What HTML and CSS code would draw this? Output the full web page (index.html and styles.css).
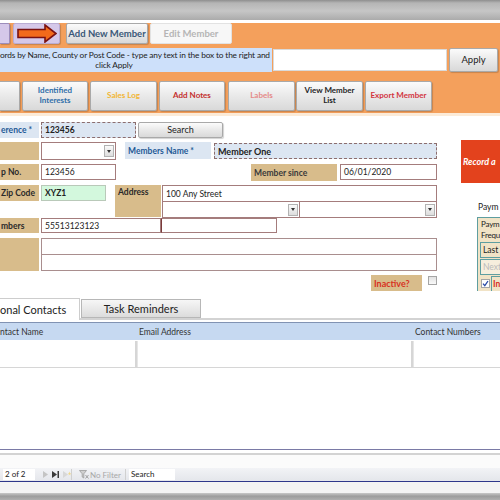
FILE: index.html
```html
<!DOCTYPE html>
<html lang="en">
<head>
    <meta charset="UTF-8">
    <title>Member Details</title>
    <link rel="stylesheet" href="styles.css">
</head>
<body>
<div class="titlebar"></div>
<div class="ribbon">
    <div class="toolbar">
        <button class="btn btn-back"></button>
        <button class="btn btn-next">
            <svg width="40" height="19" viewBox="0 0 40 19">
                <path d="M1 5.5 H28 V1 L39 9.5 L28 18 V13.5 H1 Z" fill="#F26A1B" stroke="#7A1212" stroke-width="1.6" stroke-linejoin="miter"/>
            </svg>
        </button>
        <button class="btn btn-add">Add New Member</button>
        <button class="btn btn-edit">Edit Member</button>
    </div>
    <div class="filter">
        <div class="hint">
            <div class="hint-first">ords by Name, County or Post Code - type any text in the box to the right and</div>
            <div class="hint-second">click Apply</div>
        </div>
        <div class="filter-box"></div>
        <button class="btn btn-apply">Apply</button>
    </div>
    <div class="actions">
        <button class="btn act act-find"></button>
        <button class="btn act act-interests">Identified<br>Interests</button>
        <button class="btn act act-sales">Sales Log</button>
        <button class="btn act act-notes">Add Notes</button>
        <button class="btn act act-labels">Labels</button>
        <button class="btn act act-view">View Member<br>List</button>
        <button class="btn act act-export">Export Member</button>
    </div>
</div>
<div class="edge"></div>

<div class="form">
    <div class="fields">
        <div class="row row-ref">
            <div class="lbl lbl-blue lbl-cut">erence *</div>
            <div class="fld fld-key fld-ref">123456</div>
            <button class="btn btn-search">Search</button>
        </div>
        <div class="row row-name">
            <div class="lbl lbl-tan lbl-cut"></div>
            <div class="fld fld-select fld-title"><span class="drop"></span></div>
            <div class="lbl lbl-blue lbl-name">Members Name *</div>
            <div class="fld fld-key fld-name">Member One</div>
        </div>
        <div class="row row-no">
            <div class="lbl lbl-tan lbl-cut">p No.</div>
            <div class="fld fld-no">123456</div>
            <div class="lbl lbl-tan lbl-since">Member since</div>
            <div class="fld fld-since">06/01/2020</div>
        </div>
        <div class="row row-address">
            <div class="lbl lbl-tan lbl-cut lbl-zip">Zip Code</div>
            <div class="fld fld-zip">XYZ1</div>
            <div class="lbl lbl-tan lbl-address">Address</div>
            <div class="address">
                <div class="fld fld-street">100 Any Street</div>
                <div class="address-pair">
                    <div class="fld fld-select fld-town"><span class="drop"></span></div>
                    <div class="fld fld-select fld-county"><span class="drop"></span></div>
                </div>
            </div>
        </div>
        <div class="row row-phone">
            <div class="lbl lbl-tan lbl-cut">mbers</div>
            <div class="fld fld-phone">55513123123</div>
            <div class="fld fld-mobile"></div>
        </div>
        <div class="row row-email">
            <div class="lbl lbl-tan lbl-cut lbl-tall"></div>
            <div class="email">
                <div class="fld fld-line"></div>
                <div class="fld fld-line"></div>
            </div>
        </div>
        <div class="row row-inactive">
            <div class="lbl lbl-tan lbl-inactive">Inactive?</div>
            <span class="check"></span>
        </div>
    </div>
    <div class="side">
        <div class="record">Record a</div>
        <div class="pay-title">Paym</div>
        <div class="pay">
            <div class="pay-text">Paym</div>
            <div class="pay-text">Frequ</div>
            <div class="pay-fld">Last</div>
            <div class="pay-fld muted">Next</div>
            <div class="pay-check">
                <span class="check checked">
                    <svg width="7" height="7" viewBox="0 0 7 7"><path d="M1 3.6 L2.8 5.6 L6 1" fill="none" stroke="#2B4BA8" stroke-width="1.3"/></svg>
                </span>
                <span class="pay-flag">In</span>
            </div>
        </div>
    </div>
</div>

<div class="tabs">
    <div class="tab active">onal Contacts</div>
    <div class="tab">Task Reminders</div>
</div>
<div class="subform">
    <div class="grid-head">
        <div class="col col-name">ntact Name</div>
        <div class="col col-email">Email Address</div>
        <div class="col col-phone">Contact Numbers</div>
    </div>
    <div class="grid-row">
        <div class="col col-name"></div>
        <div class="col col-email"></div>
        <div class="col col-phone"></div>
    </div>
</div>
<div class="rule-dark"></div>
<div class="rule-light"></div>
<div class="navbar">
    <div class="nav-pos">2 of 2</div>
    <div class="nav-arrows">
        <svg width="5" height="7" viewBox="0 0 5 7"><path d="M0 0 L5 3.5 L0 7 Z" fill="#c4c4c4"/></svg>
        <svg width="7" height="7" viewBox="0 0 7 7"><path d="M0 0 L5 3.5 L0 7 Z" fill="#3a3a3a"/><rect x="5.5" y="0" width="1.5" height="7" fill="#3a3a3a"/></svg>
        <svg width="8" height="7" viewBox="0 0 8 7"><path d="M0 0 L5 3.5 L0 7 Z" fill="#d8d8d8"/><path d="M6.5 0.5 L7 2 L8 2 L7.2 3 L7.5 4.5 L6.5 3.6 L5.6 4.5 L5.9 3 L5 2 L6 2 Z" fill="#f0d98a"/></svg>
    </div>
    <div class="nav-filter">
        <svg width="10" height="9" viewBox="0 0 10 9"><path d="M0.5 0.5 H7.5 L4.8 3.8 V8 L3.2 7 V3.8 Z" fill="#d0d0d0" stroke="#9a9a9a" stroke-width="0.8"/><path d="M6.5 5 L9.5 8.5 M9.5 5 L6.5 8.5" stroke="#9a9a9a" stroke-width="0.9"/></svg>
        <span>No Filter</span>
    </div>
    <div class="nav-search">Search</div>
</div>
<div class="footer"></div>
<div class="statusbar"></div>
</body>
</html>
```

FILE: styles.css
```css
* {
    box-sizing: border-box;
}
html, body {
    margin: 0;
    width: 500px;
    height: 500px;
    overflow: hidden;
}
body {
    font-family: Lato, "Open Sans", sans-serif;
    background: #FFF;
    color: #222;
}
.titlebar {
    height: 20px;
    background: linear-gradient(to bottom, #8E8E8E 0, #B5B5B5 3px, #C6C6C6 55%, #ABABAB 100%);
}
.ribbon {
    background: #F4A05C;
    padding-bottom: 2px;
}
.btn {
    font-family: inherit;
    padding: 0;
    margin: 0;
    border: 1px solid #A9A9A9;
    border-radius: 2px;
    background: linear-gradient(to bottom, #FBFBFB, #E9E9E9 50%, #D9D9D9);
    box-shadow: 1px 1px 1px rgba(0, 0, 0, 0.18);
    font-size: 8px;
    font-weight: bold;
    line-height: 1.2;
    color: #222;
}
.toolbar {
    display: flex;
    height: 21px;
    margin-top: 3px;
}
.btn-back {
    width: 10px;
    background: #D5C8E9;
    border-color: #9C8DBB;
    border-left: none;
    border-radius: 0 2px 2px 0;
}
.btn-next {
    width: 47px;
    margin-left: 3px;
    background: #D5C8E9;
    border-color: #B9ACD3;
    display: flex;
    align-items: center;
    justify-content: center;
}
.btn-add {
    width: 82px;
    margin-left: 6px;
    font-size: 9.5px;
    color: #3A5878;
}
.btn-edit {
    width: 82px;
    margin-left: 2px;
    font-size: 9.5px;
    color: #B5B5B5;
    background: #F7F7F7;
    border-color: #E2E2E2;
    box-shadow: none;
}
.filter {
    display: flex;
    height: 24px;
    margin-top: 4px;
}
.hint {
    width: 272px;
    padding-top: 2px;
    background: #CDE0FA;
    font-size: 8.3px;
    line-height: 10px;
    white-space: nowrap;
    letter-spacing: -0.15px;
    overflow: hidden;
}
.hint-second {
    padding-right: 44px;
    text-align: center;
}
.filter-box {
    width: 174px;
    height: 22px;
    margin: 1px 0 0 1px;
    background: #FFF;
    border: 1px solid #DADADA;
}
.btn-apply {
    width: 49px;
    margin-left: 2px;
    font-size: 9.5px;
    font-weight: normal;
}
.actions {
    display: flex;
    height: 30px;
    margin-top: 9px;
}
.act {
    width: 67px;
    margin-left: 2px;
}
.act-find {
    width: 20px;
    margin-left: 0;
    border-left: none;
    border-radius: 0 2px 2px 0;
}
.act-interests {
    width: 66px;
    color: #2F6EA8;
}
.act-sales {
    color: #F2B632;
}
.act-notes {
    width: 66px;
    color: #C4302E;
}
.act-labels {
    margin-left: 3px;
    color: #E58A88;
}
.act-view {
    margin-left: 1px;
    color: #1E1E1E;
}
.act-export {
    color: #D3343F;
}
.edge {
    height: 3px;
    background: #FCEBD8;
}

/* member fields */
.form {
    display: flex;
    height: 175px;
}
.fields {
    width: 440px;
    flex: none;
}
.row {
    display: flex;
    align-items: flex-start;
}
.row-ref {
    height: 16px;
    margin-top: 6px;
}
.row-name {
    height: 18px;
    margin-top: 4px;
}
.row-no {
    height: 16px;
    margin-top: 4px;
}
.row-address {
    height: 32px;
    margin-top: 5px;
}
.row-phone {
    height: 15px;
    margin-top: 1px;
}
.row-email {
    height: 33px;
    margin-top: 5px;
}
.row-inactive {
    height: 16px;
    margin-top: 4px;
}
.lbl {
    height: 100%;
    display: flex;
    align-items: center;
    padding: 0 3px;
    font-size: 8.5px;
    font-weight: bold;
    white-space: nowrap;
    overflow: hidden;
    flex: none;
}
.lbl-tan {
    background: #D8BC8B;
    color: #2A2A2A;
}
.lbl-blue {
    background: #DCE6F2;
    color: #1F5A96;
}
.lbl-cut {
    width: 39px;
    padding-left: 1px;
}
.lbl-zip {
    height: 16px;
}
.fld {
    height: 100%;
    display: flex;
    align-items: center;
    padding-left: 3px;
    background: #FFF;
    border: 1px solid #A47C7C;
    font-size: 8.5px;
    white-space: nowrap;
    overflow: hidden;
    flex: none;
}
.fld-key {
    border: 1px dashed #8C6E6E;
    background: #DCE6F2;
    font-weight: bold;
}
.fld-ref {
    width: 95px;
    margin-left: 2px;
}
.btn-search {
    width: 85px;
    height: 16px;
    margin-left: 2px;
    font-size: 9px;
    font-weight: normal;
}
.fld-select {
    padding-right: 1px;
}
.drop {
    width: 10px;
    height: 12px;
    margin-left: auto;
    border: 1px solid #B2B2B2;
    background: linear-gradient(to bottom, #FAFAFA, #DDD);
    display: flex;
    align-items: center;
    justify-content: center;
}
.drop::before {
    content: "";
    border-left: 2.5px solid transparent;
    border-right: 2.5px solid transparent;
    border-top: 3px solid #333;
}
.fld-title {
    width: 75px;
    margin-left: 2px;
}
.lbl-name {
    width: 86px;
    height: 17px;
    margin-left: 9px;
}
.fld-name {
    width: 223px;
    height: 16px;
    margin: 1px 0 0 3px;
    font-size: 9px;
}
.fld-no {
    width: 75px;
    margin-left: 2px;
}
.lbl-since {
    width: 86px;
    margin-left: 135px;
    height: 17px;
    color: #3A3A3A;
}
.fld-since {
    width: 97px;
    margin-left: 3px;
}
.fld-zip {
    width: 65px;
    height: 16px;
    margin-left: 2px;
    background: #D3F8DD;
    border-color: #B9C9B9;
    font-weight: bold;
}
.lbl-address {
    width: 46px;
    margin-left: 9px;
    align-items: flex-start;
    padding-top: 2px;
}
.address {
    width: 275px;
    margin-left: 1px;
}
.fld-street {
    height: 17px;
}
.address-pair {
    display: flex;
    height: 16px;
}
.fld-town {
    width: 138px;
    border-top: none;
}
.fld-county {
    width: 137px;
    border-top: none;
    border-left: none;
}
.fld-phone {
    width: 120px;
    margin-left: 2px;
}
.fld-mobile {
    width: 116px;
    border-left-color: #7A3A3A;
}
.lbl-tall {
    height: 33px;
}
.email {
    width: 396px;
    margin-left: 2px;
}
.fld-line {
    height: 17px;
    border-color: #A98E8E;
}
.fld-line + .fld-line {
    height: 16px;
    border-top: none;
}
.lbl-inactive {
    width: 51px;
    margin-left: 371px;
    color: #D7311F;
    font-size: 9px;
}
.check {
    width: 9px;
    height: 9px;
    margin: 1px 0 0 6px;
    border: 1px solid #A5A5A5;
    background: linear-gradient(to bottom, #E2E2E2, #FAFAFA);
    display: flex;
    align-items: center;
    justify-content: center;
    flex: none;
}

/* right hand panel */
.side {
    flex: none;
    width: 60px;
    overflow: hidden;
}
.record {
    width: 39px;
    height: 43px;
    margin: 24px 0 0 21px;
    padding-left: 2px;
    display: flex;
    align-items: center;
    background: #E3421D;
    color: #FFF;
    font-size: 9px;
    font-weight: bold;
    font-style: italic;
    white-space: nowrap;
}
.pay-title {
    margin: 19px 0 0 38px;
    font-size: 8.5px;
    line-height: 10px;
    white-space: nowrap;
}
.pay {
    width: 23px;
    height: 79px;
    margin: 5px 0 0 37px;
    padding: 1px 0 0 2px;
    border: 1px solid #5E9EA0;
    border-right: none;
    background: #F1E3C6;
    font-size: 8.5px;
}
.pay-text {
    line-height: 11px;
    padding-left: 1px;
    font-size: 8px;
    letter-spacing: -0.2px;
    white-space: nowrap;
}
.pay-fld {
    height: 16px;
    margin-top: 1px;
    padding-left: 2px;
    display: flex;
    align-items: center;
    border: 1px solid #5E9EA0;
    border-right: none;
    white-space: nowrap;
}
.pay-fld.muted {
    color: #BBB;
    background: #F6EEDD;
}
.pay-check {
    display: flex;
    align-items: flex-start;
    margin-top: 1px;
}
.pay-check .check {
    margin: 3px 0 0 1px;
    background: #FFF;
}
.pay-flag {
    flex: 1;
    height: 16px;
    margin-left: 1px;
    padding-left: 1px;
    display: flex;
    align-items: center;
    border: 1px solid #5E9EA0;
    border-right: none;
    color: #D7311F;
    font-weight: bold;
    white-space: nowrap;
}

/* sub form */
.tabs {
    display: flex;
    align-items: flex-start;
    height: 22px;
    margin-top: 7px;
    border-bottom: 2px solid #D3D3D3;
}
.tab {
    width: 120px;
    height: 19px;
    margin-top: 1px;
    display: flex;
    align-items: center;
    justify-content: center;
    border: 1px solid #B7B7B7;
    background: linear-gradient(to bottom, #F6F6F6, #DCDCDC);
    font-size: 11px;
    white-space: nowrap;
}
.tab.active {
    width: 80px;
    height: 22px;
    margin: 0 1px 0 0;
    justify-content: flex-start;
    border-color: #CDCDCD;
    border-bottom: none;
    border-left: none;
    background: #FFF;
}
.subform {
    height: 129px;
    padding-top: 2px;
}
.grid-head {
    display: flex;
    height: 18px;
    background: #C6D9F1;
    border-top: 1px solid #8193B3;
    font-size: 8.5px;
    color: #333;
}
.grid-head .col {
    display: flex;
    align-items: center;
    padding-left: 2px;
}
.grid-head .col-name {
    padding-left: 0;
}
.grid-row {
    display: flex;
    height: 28px;
    border-top: 1px solid #FFF;
    border-bottom: 1px solid #D6D6D6;
}
.grid-row .col {
    border-right: 2px solid #D6D6D6;
}
.col {
    flex: none;
    white-space: nowrap;
}
.col-name {
    width: 137px;
}
.col-email {
    width: 276px;
}
.col-phone {
    width: 87px;
}
.grid-row .col-email,
.grid-row .col-phone {
    border-left: 1px solid #E6E6E6;
}
.grid-row .col-phone {
    border-right: none;
}
.rule-dark {
    height: 4px;
    border-top: 1px solid #7A7AA6;
}
.rule-light {
    height: 15px;
    border-top: 2px solid #D3D3D3;
    background: #FBFBFB;
}
.navbar {
    display: flex;
    align-items: center;
    height: 14px;
    background: linear-gradient(to bottom, #F2F3F6, #E4E6EB);
    border-bottom: 1px solid #2E378A;
    font-size: 8px;
}
.nav-pos {
    width: 32px;
    height: 11px;
    margin-left: 3px;
    padding-left: 2px;
    background: #FFF;
    line-height: 11px;
}
.nav-arrows {
    display: flex;
    align-items: center;
    gap: 4px;
    width: 37px;
    height: 11px;
    padding-left: 8px;
    border-right: 1px solid #D0D0D0;
}
.nav-filter {
    display: flex;
    align-items: center;
    gap: 1px;
    height: 11px;
    padding: 0 4px 0 7px;
    border-right: 1px solid #D0D0D0;
    color: #A8A8A8;
}
.nav-search {
    width: 46px;
    height: 11px;
    margin-left: 3px;
    padding-left: 2px;
    background: #FFF;
    line-height: 11px;
}
.footer {
    height: 11px;
    background: #F3F3F3;
}
.statusbar {
    height: 8px;
    background: linear-gradient(to bottom, #C8C8C8, #9C9C9C 40%, #B4B4B4);
}
```
